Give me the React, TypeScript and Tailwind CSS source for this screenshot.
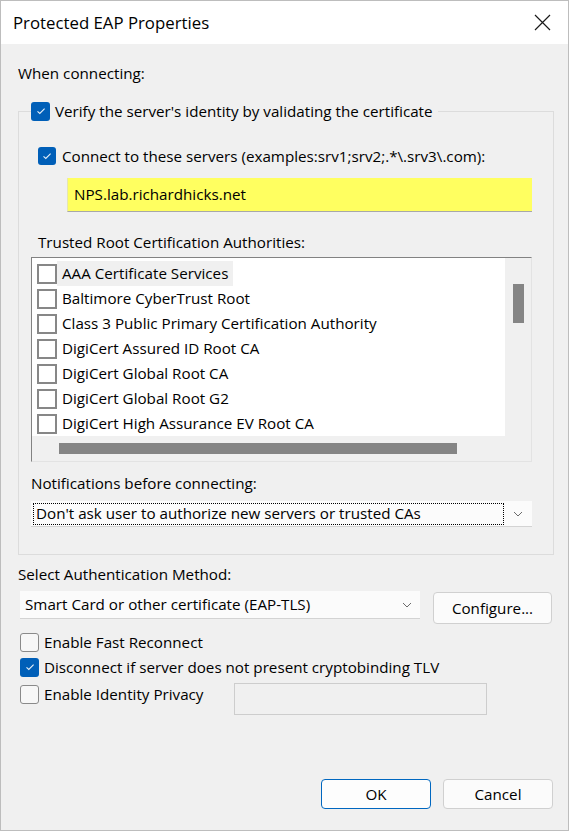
import React from "react";

const trustedRoots = [
  "AAA Certificate Services",
  "Baltimore CyberTrust Root",
  "Class 3 Public Primary Certification Authority",
  "DigiCert Assured ID Root CA",
  "DigiCert Global Root CA",
  "DigiCert Global Root G2",
  "DigiCert High Assurance EV Root CA",
];

function Tick() {
  return (
    <svg width="10" height="8" viewBox="0 0 10 8" fill="none">
      <path d="M1.5 4.3 L3.8 6.4 L8.6 1.6" stroke="white" strokeWidth="1.1" strokeOpacity="0.9" />
    </svg>
  );
}

function Chevron() {
  return (
    <svg width="10" height="6" viewBox="0 0 10 6" fill="none">
      <path d="M1 1 L5 5 L9 1" stroke="#6b6b6b" strokeWidth="1" />
    </svg>
  );
}

function Label({ children }: { children: React.ReactNode }) {
  return <div className="h-[20px] leading-[20px] whitespace-nowrap">{children}</div>;
}

export default function App() {
  return (
    <div className="w-[569px] h-[831px] bg-[#f0f0f0] border border-[#bdbdbd] flex flex-col text-[15.2px] text-black font-['Open_Sans',sans-serif] overflow-hidden">
      {/* title bar */}
      <div className="h-[43px] bg-white flex items-center justify-between pl-[12px] pr-[17px] shrink-0">
        <span className="leading-[20px] text-[16.8px]">Protected EAP Properties</span>
        <svg width="17" height="17" viewBox="0 0 17 17" fill="none">
          <path d="M1 1 L16 16 M16 1 L1 16" stroke="#1a1a1a" strokeWidth="1.2" />
        </svg>
      </div>

      <div className="flex-1 flex flex-col pl-[17px] pr-[14px] pb-[21px]">
        <div className="mt-[19px]">
          <Label>When connecting:</Label>
        </div>

        <fieldset className="mt-[18px] border border-[#dcdcdc] px-[12px] pb-[27px]">
          <legend className="flex items-center h-[20px] pr-[5px]">
            <span className="w-[19px] h-[19px] rounded-[3px] bg-[#005fb8] flex items-center justify-center">
              <Tick />
            </span>
            <span className="ml-[5px] leading-[20px] whitespace-nowrap">
              Verify the server's identity by validating the certificate
            </span>
          </legend>

          <div className="mt-[25px] ml-[7px] flex items-center h-[20px]">
            <span className="w-[18px] h-[18px] rounded-[3px] bg-[#005fb8] flex items-center justify-center">
              <Tick />
            </span>
            <span className="ml-[6px] whitespace-nowrap">
              Connect to these servers (examples:srv1;srv2;.*\.srv3\.com):
            </span>
          </div>

          <div className="mt-[12px] ml-[36px] w-[465px] h-[34px] bg-[#ffff60] border-b border-[#a8a8a8] border-l border-l-[#e6e6b0] flex items-center pl-[6px]">
            NPS.lab.richardhicks.net
          </div>

          <div className="mt-[20px] ml-[7px]">
            <Label>Trusted Root Certification Authorities:</Label>
          </div>

          <div className="mt-[5px] w-[501px] h-[205px] flex border-t border-l border-[#828282] border-r border-b border-r-[#e3e3e3] border-b-[#e3e3e3]">
            <div className="w-[473px] flex flex-col">
              <div className="h-[178px] bg-white pt-[3px]">
                {trustedRoots.map((name, i) => (
                  <div key={name} className="h-[25px] flex items-center pl-[5px]">
                    <span className="w-[20px] h-[20px] border-2 border-[#878787] bg-white shrink-0" />
                    <span
                      className={`h-[25px] flex items-center px-[5px] whitespace-nowrap ${
                        i === 0 ? "bg-[#f0f0f0]" : ""
                      }`}
                    >
                      {name}
                    </span>
                  </div>
                ))}
              </div>
              <div className="flex-1 bg-[#f0f0f0]">
                <div className="mt-[7px] ml-[27px] w-[398px] h-[11px] bg-[#858585]" />
              </div>
            </div>
            <div className="flex-1 bg-[#f0f0f0]">
              <div className="mt-[26px] ml-[8px] w-[11px] h-[39px] bg-[#858585]" />
            </div>
          </div>

          <div className="mt-[11px]">
            <Label>Notifications before connecting:</Label>
          </div>

          <div className="mt-[8px] w-[501px] h-[26px] bg-[#fbfbfb] border-b border-[#d3d3d3] flex items-center">
            <div className="ml-[2px] w-[471px] h-[22px] border border-dotted border-black flex items-center pl-[2px] whitespace-nowrap">
              Don't ask user to authorize new servers or trusted CAs
            </div>
            <div className="flex-1 flex justify-center">
              <Chevron />
            </div>
          </div>
        </fieldset>

        <div className="mt-[9px]">
          <Label>Select Authentication Method:</Label>
        </div>

        <div className="mt-[7px] flex items-start">
          <div className="ml-[2px] w-[400px] h-[28px] bg-[#fbfbfb] border-b border-[#d3d3d3] flex items-center justify-between pl-[5px] pr-[8px]">
            <span className="whitespace-nowrap">Smart Card or other certificate (EAP-TLS)</span>
            <Chevron />
          </div>
          <button
            type="button"
            className="ml-[13px] mt-[1px] w-[119px] h-[32px] rounded-[4px] border border-[#d0d0d0] bg-[#fbfbfb]"
          >
            Configure...
          </button>
        </div>

        <div className="mt-[8px] ml-[2px] flex items-center h-[20px]">
          <span className="w-[19px] h-[19px] rounded-[3px] border border-[#8a8a8a] bg-[#f7f7f7]" />
          <span className="ml-[5px] whitespace-nowrap">Enable Fast Reconnect</span>
        </div>

        <div className="mt-[5px] ml-[2px] flex items-center h-[20px]">
          <span className="w-[19px] h-[19px] rounded-[3px] bg-[#005fb8] flex items-center justify-center">
            <Tick />
          </span>
          <span className="ml-[5px] whitespace-nowrap">Disconnect if server does not present cryptobinding TLV</span>
        </div>

        <div className="mt-[7px] ml-[2px] flex items-start">
          <div className="w-[214px] flex items-center h-[20px]">
            <span className="w-[19px] h-[19px] rounded-[3px] border border-[#8a8a8a] bg-[#f7f7f7]" />
            <span className="ml-[5px] whitespace-nowrap">Enable Identity Privacy</span>
          </div>
          <div className="-mt-[1px] w-[253px] h-[32px] border border-[#cdcdcd] bg-[#f0f0f0]" />
        </div>

        <div className="mt-auto flex justify-end gap-[12px] pr-[1px]">
          <button
            type="button"
            className="w-[110px] h-[30px] rounded-[4px] border border-[#0067c0] bg-[#fdfdfd]"
          >
            OK
          </button>
          <button
            type="button"
            className="w-[110px] h-[30px] rounded-[4px] border border-[#d0d0d0] bg-[#fbfbfb]"
          >
            Cancel
          </button>
        </div>
      </div>
    </div>
  );
}
